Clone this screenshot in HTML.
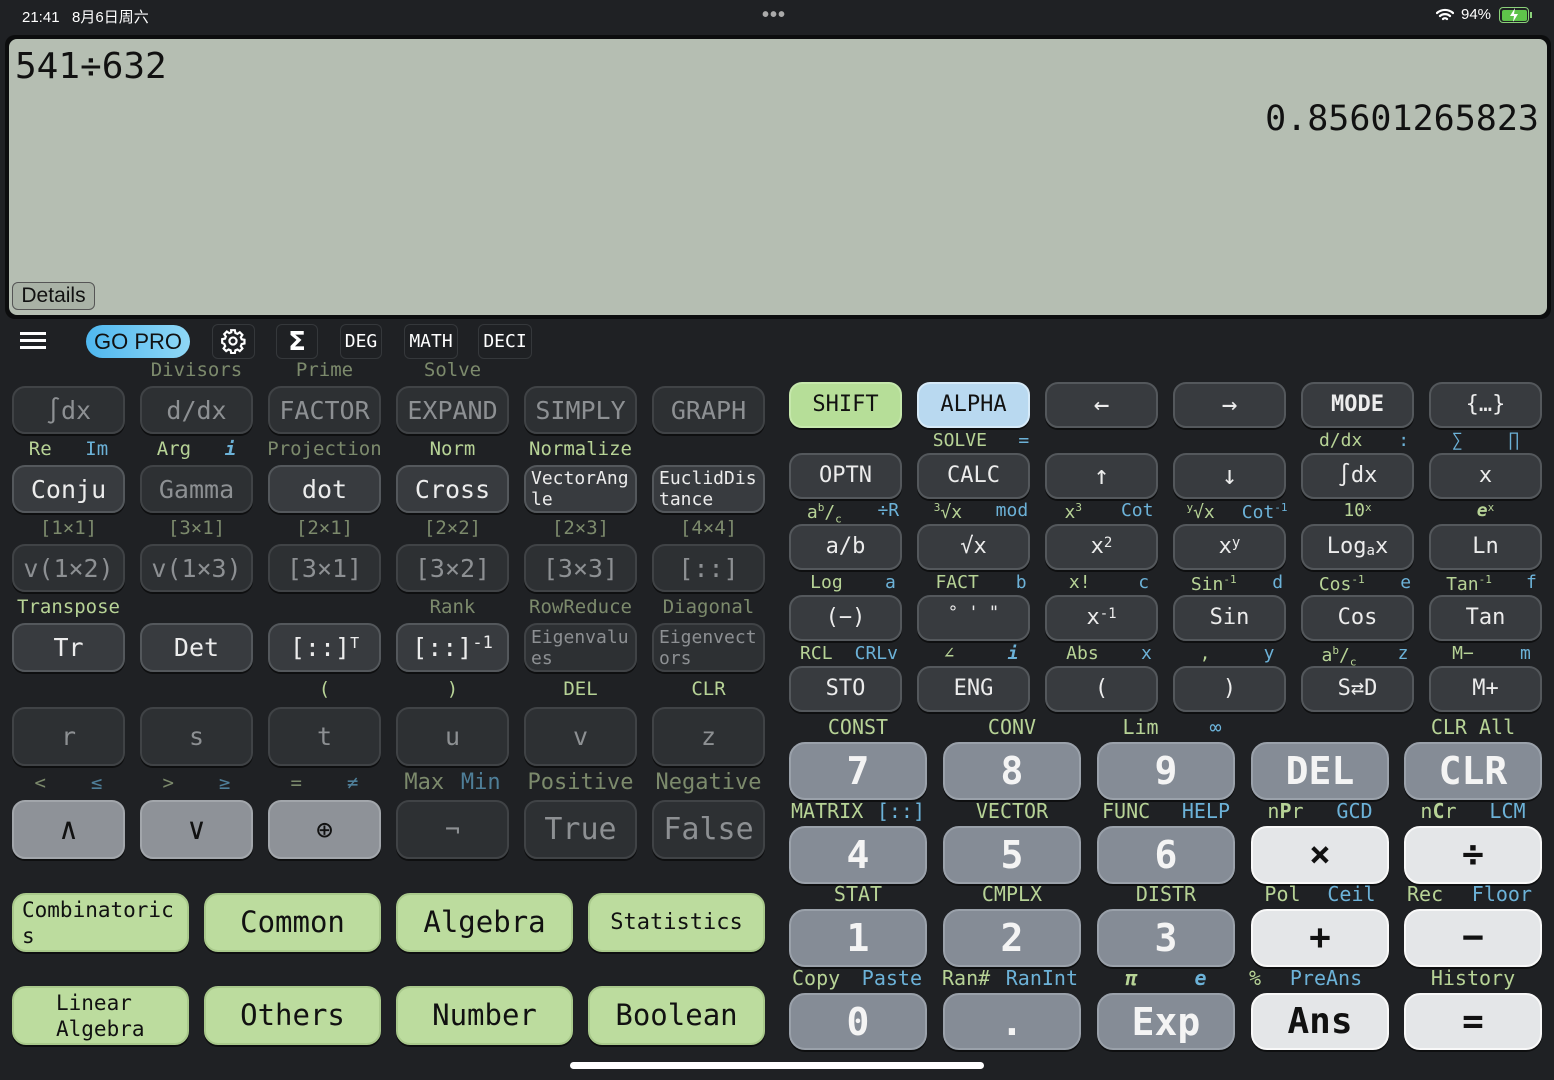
<!DOCTYPE html>
<html><head><meta charset="utf-8"><style>
*{box-sizing:border-box;margin:0;padding:0}
body{width:1554px;height:1080px;background:#1f2124;position:relative;overflow:hidden;font-family:"DejaVu Sans Mono","Liberation Mono",monospace;color:#e6e6e6}
.a{position:absolute}
.k{position:absolute;display:flex;align-items:center;justify-content:center;border-radius:13px;background:#383b3f;border:2px solid #54585c;box-shadow:0 2px 0 #0e0f10;color:#ececec;font-size:25px;white-space:nowrap;line-height:1}
.d{background:#2d3033;border-color:#404346;color:#8d9093}
.r{font-size:22px}
.n{background:#858c96;border-color:#9aa1aa;color:#f4f4f4;font-size:38px;font-weight:bold;border-radius:16px}
.o{background:#e4e6e8;border-color:#f8f8f8;color:#111;font-size:36px;font-weight:bold;border-radius:16px}
.g{background:#bcdc9e;border-color:#a9c98b;color:#111;font-size:29px;border-radius:14px}
.w{font-size:18px;line-height:21px;white-space:normal;justify-content:flex-start;padding-left:5px;padding-right:0;text-align:left;word-break:break-all}
.l{position:absolute;display:flex;justify-content:space-around;font-size:19px;line-height:1;color:#b7d396;white-space:nowrap}
.l.c{justify-content:center}
.b{color:#6cb2d8}
.m{color:#7c8a6c}
.mb{color:#4f7f99}
.lg{background:#8e9298;border-color:#a2a6ab;color:#111}
.np{font-size:20px}
</style></head><body>
<div class="a" style="left:22px;top:6px;font:15px 'Liberation Sans','Noto Sans CJK SC',sans-serif;color:#fff">21:41&nbsp;&nbsp; 8月6日周六</div>
<div class="a" style="left:762px;top:4px;font:bold 20px 'Liberation Sans',sans-serif;color:#aaa;letter-spacing:1px">•••</div>
<svg class="a" style="left:1436px;top:8px" width="18" height="14" viewBox="0 0 18 14"><path d="M1 5a12 12 0 0 1 16 0M4 8a7.5 7.5 0 0 1 10 0M7 11a3 3 0 0 1 4 0" stroke="#fff" stroke-width="2.2" fill="none" stroke-linecap="round"/></svg>
<div class="a" style="left:1461px;top:6px;font:15px 'Liberation Sans',sans-serif;color:#fff">94%</div>
<div class="a" style="left:1499px;top:7px;width:30px;height:16px;border:1.5px solid #8bd17a;border-radius:4px;padding:1.5px"><div style="width:100%;height:100%;background:#5ec34a;border-radius:2px"></div></div>
<div class="a" style="left:1530px;top:12px;width:2px;height:6px;background:#8bd17a"></div>
<svg class="a" style="left:1507px;top:7px" width="14" height="16" viewBox="0 0 14 16"><path d="M8 1L3 9h4l-1 6 5-8H7z" fill="#fff"/></svg>
<div class="a" style="left:5px;top:35px;width:1546px;height:284px;background:#0c0d0e;border-radius:10px"></div>
<div class="a" style="left:9px;top:39px;width:1538px;height:276px;background:#b5beb2;border-radius:8px"></div>
<div class="a" style="left:15px;top:46px;font-size:36px;color:#111">541÷632</div>
<div class="a" style="right:15px;top:99px;font-size:35px;color:#111">0.85601265823</div>
<div class="a" style="left:12px;top:282px;width:83px;height:28px;border:1px solid #555;border-radius:6px;background:#a9b2a6;font:21px 'Liberation Sans',sans-serif;color:#111;text-align:center;line-height:26px">Details</div>
<div class="a" style="left:20px;top:332px;width:26px;height:3px;background:#fff;box-shadow:0 7px 0 #fff,0 14px 0 #fff"></div>
<div class="a" style="left:86px;top:325px;width:104px;height:33px;border-radius:17px;background:linear-gradient(90deg,#4fb8f0,#8fd7f5);font:22px 'Liberation Sans',sans-serif;color:#111;text-align:center;line-height:33px">GO PRO</div>
<div class="a" style="left:212px;top:324px;width:43px;height:35px;border:1px solid #35383b;border-radius:6px"></div>
<svg class="a" style="left:220px;top:328px" width="26" height="26" viewBox="0 0 24 24"><path d="M10.3 2h3.4l.5 2.6 1.9.8 2.2-1.5 2.4 2.4-1.5 2.2.8 1.9 2.6.5v3.4l-2.6.5-.8 1.9 1.5 2.2-2.4 2.4-2.2-1.5-1.9.8-.5 2.6h-3.4l-.5-2.6-1.9-.8-2.2 1.5-2.4-2.4 1.5-2.2-.8-1.9L2 13.7v-3.4l2.6-.5.8-1.9-1.5-2.2 2.4-2.4 2.2 1.5 1.9-.8z" fill="none" stroke="#fff" stroke-width="2"/><circle cx="12" cy="12" r="3.3" fill="none" stroke="#fff" stroke-width="2"/></svg>
<div class="a" style="left:276px;top:324px;width:42px;height:35px;border:1px solid #35383b;border-radius:6px;font:bold 26px 'DejaVu Sans',sans-serif;color:#fff;text-align:center;line-height:34px">Σ</div>
<div class="a" style="left:340px;top:324px;width:42px;height:35px;border:1px solid #35383b;border-radius:6px;font-size:18px;color:#fff;text-align:center;line-height:34px">DEG</div>
<div class="a" style="left:404px;top:324px;width:54px;height:35px;border:1px solid #35383b;border-radius:6px;font-size:18px;color:#fff;text-align:center;line-height:34px">MATH</div>
<div class="a" style="left:478px;top:324px;width:54px;height:35px;border:1px solid #35383b;border-radius:6px;font-size:18px;color:#fff;text-align:center;line-height:34px">DECI</div>

<div class="l c m" style="left:140px;top:361px;width:113px">Divisors</div>
<div class="l c m" style="left:268px;top:361px;width:113px">Prime</div>
<div class="l c m" style="left:396px;top:361px;width:113px">Solve</div>
<div class="k d" style="left:12px;top:386px;width:113px;height:48px">∫dx</div>
<div class="k d" style="left:140px;top:386px;width:113px;height:48px">d/dx</div>
<div class="k d" style="left:268px;top:386px;width:113px;height:48px">FACTOR</div>
<div class="k d" style="left:396px;top:386px;width:113px;height:48px">EXPAND</div>
<div class="k d" style="left:524px;top:386px;width:113px;height:48px">SIMPLY</div>
<div class="k d" style="left:652px;top:386px;width:113px;height:48px">GRAPH</div>
<div class="l" style="left:12px;top:440px;width:113px"><span>Re</span><span class="b">Im</span></div>
<div class="l" style="left:140px;top:440px;width:113px"><span>Arg</span><span class="b"><b><i>i</i></b></span></div>
<div class="l c m" style="left:262px;top:440px;width:125px">Projection</div>
<div class="l c" style="left:396px;top:440px;width:113px">Norm</div>
<div class="l c" style="left:520px;top:440px;width:121px">Normalize</div>
<div class="k" style="left:12px;top:465px;width:113px;height:48px">Conju</div>
<div class="k d" style="left:140px;top:465px;width:113px;height:48px">Gamma</div>
<div class="k" style="left:268px;top:465px;width:113px;height:48px">dot</div>
<div class="k" style="left:396px;top:465px;width:113px;height:48px">Cross</div>
<div class="k w" style="left:524px;top:465px;width:113px;height:48px">VectorAngle</div>
<div class="k w" style="left:652px;top:465px;width:113px;height:48px">EuclidDistance</div>
<div class="l c m" style="left:12px;top:519px;width:113px">[1×1]</div>
<div class="l c m" style="left:140px;top:519px;width:113px">[3×1]</div>
<div class="l c m" style="left:268px;top:519px;width:113px">[2×1]</div>
<div class="l c m" style="left:396px;top:519px;width:113px">[2×2]</div>
<div class="l c m" style="left:524px;top:519px;width:113px">[2×3]</div>
<div class="l c m" style="left:652px;top:519px;width:113px">[4×4]</div>
<div class="k d" style="left:12px;top:544px;width:113px;height:48px">v(1×2)</div>
<div class="k d" style="left:140px;top:544px;width:113px;height:48px">v(1×3)</div>
<div class="k d" style="left:268px;top:544px;width:113px;height:48px">[3×1]</div>
<div class="k d" style="left:396px;top:544px;width:113px;height:48px">[3×2]</div>
<div class="k d" style="left:524px;top:544px;width:113px;height:48px">[3×3]</div>
<div class="k d" style="left:652px;top:544px;width:113px;height:48px">[::]</div>
<div class="l c" style="left:8px;top:598px;width:121px">Transpose</div>
<div class="l c m" style="left:396px;top:598px;width:113px">Rank</div>
<div class="l c m" style="left:520px;top:598px;width:121px">RowReduce</div>
<div class="l c m" style="left:652px;top:598px;width:113px">Diagonal</div>
<div class="k" style="left:12px;top:623px;width:113px;height:49px">Tr</div>
<div class="k" style="left:140px;top:623px;width:113px;height:49px">Det</div>
<div class="k" style="left:268px;top:623px;width:113px;height:49px">[::]<sup style="font-size:15px;position:relative;top:-4px">T</sup></div>
<div class="k" style="left:396px;top:623px;width:113px;height:49px">[::]<sup style="font-size:17px;position:relative;top:-4px">-1</sup></div>
<div class="k d w" style="left:524px;top:623px;width:113px;height:49px">Eigenvalues</div>
<div class="k d w" style="left:652px;top:623px;width:113px;height:49px">Eigenvectors</div>
<div class="l c" style="left:268px;top:680px;width:113px">(</div>
<div class="l c" style="left:396px;top:680px;width:113px">)</div>
<div class="l c" style="left:524px;top:680px;width:113px">DEL</div>
<div class="l c" style="left:652px;top:680px;width:113px">CLR</div>
<div class="k d" style="left:12px;top:707px;width:113px;height:59px">r</div>
<div class="k d" style="left:140px;top:707px;width:113px;height:59px">s</div>
<div class="k d" style="left:268px;top:707px;width:113px;height:59px">t</div>
<div class="k d" style="left:396px;top:707px;width:113px;height:59px">u</div>
<div class="k d" style="left:524px;top:707px;width:113px;height:59px">v</div>
<div class="k d" style="left:652px;top:707px;width:113px;height:59px">z</div>
<div class="l m" style="left:12px;top:774px;width:113px"><span>&lt;</span><span class="mb">≤</span></div>
<div class="l m" style="left:140px;top:774px;width:113px"><span>&gt;</span><span class="mb">≥</span></div>
<div class="l m" style="left:268px;top:774px;width:113px"><span>=</span><span class="mb">≠</span></div>
<div class="l m" style="left:396px;top:772px;width:113px;font-size:22px"><span>Max</span><span class="mb">Min</span></div>
<div class="l c m" style="left:518px;top:772px;width:125px;font-size:22px">Positive</div>
<div class="l c m" style="left:646px;top:772px;width:125px;font-size:22px">Negative</div>
<div class="k lg" style="left:12px;top:800px;width:113px;height:59px;font-size:30px">∧</div>
<div class="k lg" style="left:140px;top:800px;width:113px;height:59px;font-size:30px">∨</div>
<div class="k lg" style="left:268px;top:800px;width:113px;height:59px;font-size:28px">⊕</div>
<div class="k d" style="left:396px;top:800px;width:113px;height:59px">¬</div>
<div class="k d" style="left:524px;top:800px;width:113px;height:59px;font-size:30px">True</div>
<div class="k d" style="left:652px;top:800px;width:113px;height:59px;font-size:30px">False</div>
<div class="k g w" style="left:12px;top:893px;width:177px;height:59px;font-size:21px;line-height:26px;padding-left:8px;padding-right:6px">Combinatorics</div>
<div class="k g" style="left:204px;top:893px;width:177px;height:59px">Common</div>
<div class="k g" style="left:396px;top:893px;width:177px;height:59px">Algebra</div>
<div class="k g" style="left:588px;top:893px;width:177px;height:59px;font-size:22px">Statistics</div>
<div class="k g" style="left:12px;top:986px;width:177px;height:59px;font-size:21px;line-height:26px;white-space:normal;text-align:left;justify-content:flex-start;padding-left:42px">Linear Algebra</div>
<div class="k g" style="left:204px;top:986px;width:177px;height:59px">Others</div>
<div class="k g" style="left:396px;top:986px;width:177px;height:59px">Number</div>
<div class="k g" style="left:588px;top:986px;width:177px;height:59px">Boolean</div>

<div class="k r" style="left:789px;top:382px;width:113px;height:46px;background:#b6de98;border-color:#c6e8ac;color:#111">SHIFT</div>
<div class="k r" style="left:917px;top:382px;width:113px;height:46px;background:#b9d9f0;border-color:#d6eaf8;color:#111">ALPHA</div>
<div class="k r" style="left:1045px;top:382px;width:113px;height:46px;font-size:26px">←</div>
<div class="k r" style="left:1173px;top:382px;width:113px;height:46px;font-size:26px">→</div>
<div class="k r" style="left:1301px;top:382px;width:113px;height:46px;font-weight:bold">MODE</div>
<div class="k r" style="left:1429px;top:382px;width:113px;height:46px">{…}</div>
<div class="l r" style="left:917px;top:432px;width:128px;font-size:18px"><span>SOLVE</span><span class="b">=</span></div>
<div class="l" style="left:1301px;top:432px;width:126px;font-size:18px"><span>d/dx</span><span class="b">:</span></div>
<div class="l b" style="left:1429px;top:432px;width:113px;font-size:18px"><span>∑</span><span>∏</span></div>
<div class="k r" style="left:789px;top:453px;width:113px;height:46px">OPTN</div>
<div class="k r" style="left:917px;top:453px;width:113px;height:46px">CALC</div>
<div class="k r" style="left:1045px;top:453px;width:113px;height:46px;font-size:26px">↑</div>
<div class="k r" style="left:1173px;top:453px;width:113px;height:46px;font-size:26px">↓</div>
<div class="k r" style="left:1301px;top:453px;width:113px;height:46px">∫dx</div>
<div class="k r" style="left:1429px;top:453px;width:113px;height:46px">x</div>
<div class="l" style="left:789px;top:502px;width:128px;font-size:18px"><span>a<sup style="font-size:11px">b</sup>/<sub style="font-size:11px">c</sub></span><span class="b">÷R</span></div>
<div class="l" style="left:917px;top:502px;width:128px;font-size:18px"><span><sup style="font-size:11px">3</sup>√x</span><span class="b">mod</span></div>
<div class="l" style="left:1045px;top:502px;width:128px;font-size:18px"><span>x<sup style="font-size:11px">3</sup></span><span class="b">Cot</span></div>
<div class="l" style="left:1173px;top:502px;width:128px;font-size:18px"><span><sup style="font-size:11px">y</sup>√x</span><span class="b">Cot<sup style="font-size:11px">-1</sup></span></div>
<div class="l c" style="left:1301px;top:502px;width:113px;font-size:18px">10<sup style="font-size:11px">x</sup></div>
<div class="l c" style="left:1429px;top:502px;width:113px;font-size:18px"><b><i>e</i></b><sup style="font-size:11px">x</sup></div>
<div class="k r" style="left:789px;top:524px;width:113px;height:46px">a/b</div>
<div class="k r" style="left:917px;top:524px;width:113px;height:46px">√x</div>
<div class="k r" style="left:1045px;top:524px;width:113px;height:46px">x<sup style="font-size:14px;position:relative;top:-4px">2</sup></div>
<div class="k r" style="left:1173px;top:524px;width:113px;height:46px">x<sup style="font-size:14px;position:relative;top:-4px">y</sup></div>
<div class="k r" style="left:1301px;top:524px;width:113px;height:46px">Log<sub style="font-size:14px;position:relative;top:4px">a</sub>x</div>
<div class="k r" style="left:1429px;top:524px;width:113px;height:46px">Ln</div>
<div class="l" style="left:789px;top:574px;width:128px;font-size:18px"><span>Log</span><span class="b">a</span></div>
<div class="l" style="left:917px;top:574px;width:128px;font-size:18px"><span>FACT</span><span class="b">b</span></div>
<div class="l" style="left:1045px;top:574px;width:128px;font-size:18px"><span>x!</span><span class="b">c</span></div>
<div class="l" style="left:1173px;top:574px;width:128px;font-size:18px"><span>Sin<sup style="font-size:11px">-1</sup></span><span class="b">d</span></div>
<div class="l" style="left:1301px;top:574px;width:128px;font-size:18px"><span>Cos<sup style="font-size:11px">-1</sup></span><span class="b">e</span></div>
<div class="l" style="left:1429px;top:574px;width:125px;font-size:18px"><span>Tan<sup style="font-size:11px">-1</sup></span><span class="b">f</span></div>
<div class="k r" style="left:789px;top:595px;width:113px;height:46px">(−)</div>
<div class="k r" style="left:917px;top:595px;width:113px;height:46px;font-size:17px;align-items:flex-start;padding-top:8px">° ' "</div>
<div class="k r" style="left:1045px;top:595px;width:113px;height:46px">x<sup style="font-size:14px;position:relative;top:-4px">-1</sup></div>
<div class="k r" style="left:1173px;top:595px;width:113px;height:46px">Sin</div>
<div class="k r" style="left:1301px;top:595px;width:113px;height:46px">Cos</div>
<div class="k r" style="left:1429px;top:595px;width:113px;height:46px">Tan</div>
<div class="l" style="left:789px;top:645px;width:120px;font-size:18px"><span>RCL</span><span class="b">CRLv</span></div>
<div class="l" style="left:917px;top:645px;width:128px;font-size:18px"><span>∠</span><span class="b"><b><i>i</i></b></span></div>
<div class="l" style="left:1045px;top:645px;width:128px;font-size:18px"><span>Abs</span><span class="b">x</span></div>
<div class="l" style="left:1173px;top:645px;width:128px;font-size:18px"><span>,</span><span class="b">y</span></div>
<div class="l" style="left:1301px;top:645px;width:128px;font-size:18px"><span>a<sup style="font-size:11px">b</sup>/<sub style="font-size:11px">c</sub></span><span class="b">z</span></div>
<div class="l" style="left:1429px;top:645px;width:125px;font-size:18px"><span>M−</span><span class="b">m</span></div>
<div class="k r" style="left:789px;top:666px;width:113px;height:46px">STO</div>
<div class="k r" style="left:917px;top:666px;width:113px;height:46px">ENG</div>
<div class="k r" style="left:1045px;top:666px;width:113px;height:46px">(</div>
<div class="k r" style="left:1173px;top:666px;width:113px;height:46px">)</div>
<div class="k r" style="left:1301px;top:666px;width:113px;height:46px">S⇄D</div>
<div class="k r" style="left:1429px;top:666px;width:113px;height:46px">M+</div>
<div class="l c np" style="left:789px;top:717px;width:138px">CONST</div>
<div class="l c np" style="left:943px;top:717px;width:138px">CONV</div>
<div class="l np" style="left:1097px;top:717px;width:150px"><span>Lim</span><span class="b">∞</span></div>
<div class="l c np" style="left:1404px;top:717px;width:138px">CLR All</div>
<div class="k n" style="left:789px;top:742px;width:138px;height:58px">7</div>
<div class="k n" style="left:943px;top:742px;width:138px;height:58px">8</div>
<div class="k n" style="left:1097px;top:742px;width:138px;height:58px">9</div>
<div class="k n" style="left:1251px;top:742px;width:138px;height:58px">DEL</div>
<div class="k n" style="left:1404px;top:742px;width:138px;height:58px">CLR</div>
<div class="l np" style="left:791px;top:801px;width:134px;justify-content:space-between"><span>MATRIX</span><span class="b">[::]</span></div>
<div class="l c np" style="left:943px;top:801px;width:138px">VECTOR</div>
<div class="l np" style="left:1102px;top:801px;width:128px;justify-content:space-between"><span>FUNC</span><span class="b">HELP</span></div>
<div class="l np" style="left:1251px;top:801px;width:138px"><span>n<b>P</b>r</span><span class="b">GCD</span></div>
<div class="l np" style="left:1404px;top:801px;width:138px"><span>n<b>C</b>r</span><span class="b">LCM</span></div>
<div class="k n" style="left:789px;top:826px;width:138px;height:58px">4</div>
<div class="k n" style="left:943px;top:826px;width:138px;height:58px">5</div>
<div class="k n" style="left:1097px;top:826px;width:138px;height:58px">6</div>
<div class="k o" style="left:1251px;top:826px;width:138px;height:58px">×</div>
<div class="k o" style="left:1404px;top:826px;width:138px;height:58px">÷</div>
<div class="l c np" style="left:789px;top:884px;width:138px">STAT</div>
<div class="l c np" style="left:943px;top:884px;width:138px">CMPLX</div>
<div class="l c np" style="left:1097px;top:884px;width:138px">DISTR</div>
<div class="l np" style="left:1251px;top:884px;width:138px"><span>Pol</span><span class="b">Ceil</span></div>
<div class="l np" style="left:1407px;top:884px;width:125px;justify-content:space-between"><span>Rec</span><span class="b">Floor</span></div>
<div class="k n" style="left:789px;top:909px;width:138px;height:58px">1</div>
<div class="k n" style="left:943px;top:909px;width:138px;height:58px">2</div>
<div class="k n" style="left:1097px;top:909px;width:138px;height:58px">3</div>
<div class="k o" style="left:1251px;top:909px;width:138px;height:58px">+</div>
<div class="k o" style="left:1404px;top:909px;width:138px;height:58px">−</div>
<div class="l np" style="left:792px;top:968px;width:130px;justify-content:space-between"><span>Copy</span><span class="b">Paste</span></div>
<div class="l np" style="left:942px;top:968px;width:136px;justify-content:space-between"><span>Ran#</span><span class="b">RanInt</span></div>
<div class="l np" style="left:1097px;top:968px;width:138px"><span><b><i>π</i></b></span><span class="b"><b><i>e</i></b></span></div>
<div class="l np" style="left:1249px;top:968px;width:142px;justify-content:space-between"><span>%</span><span class="b">PreAns</span><span></span></div>
<div class="l c np" style="left:1404px;top:968px;width:138px">History</div>
<div class="k n" style="left:789px;top:993px;width:138px;height:57px">0</div>
<div class="k n" style="left:943px;top:993px;width:138px;height:57px">.</div>
<div class="k n" style="left:1097px;top:993px;width:138px;height:57px">Exp</div>
<div class="k o" style="left:1251px;top:993px;width:138px;height:57px">Ans</div>
<div class="k o" style="left:1404px;top:993px;width:138px;height:57px">=</div>
<div class="a" style="left:570px;top:1062px;width:414px;height:7px;border-radius:4px;background:#fff"></div>
</body></html>
